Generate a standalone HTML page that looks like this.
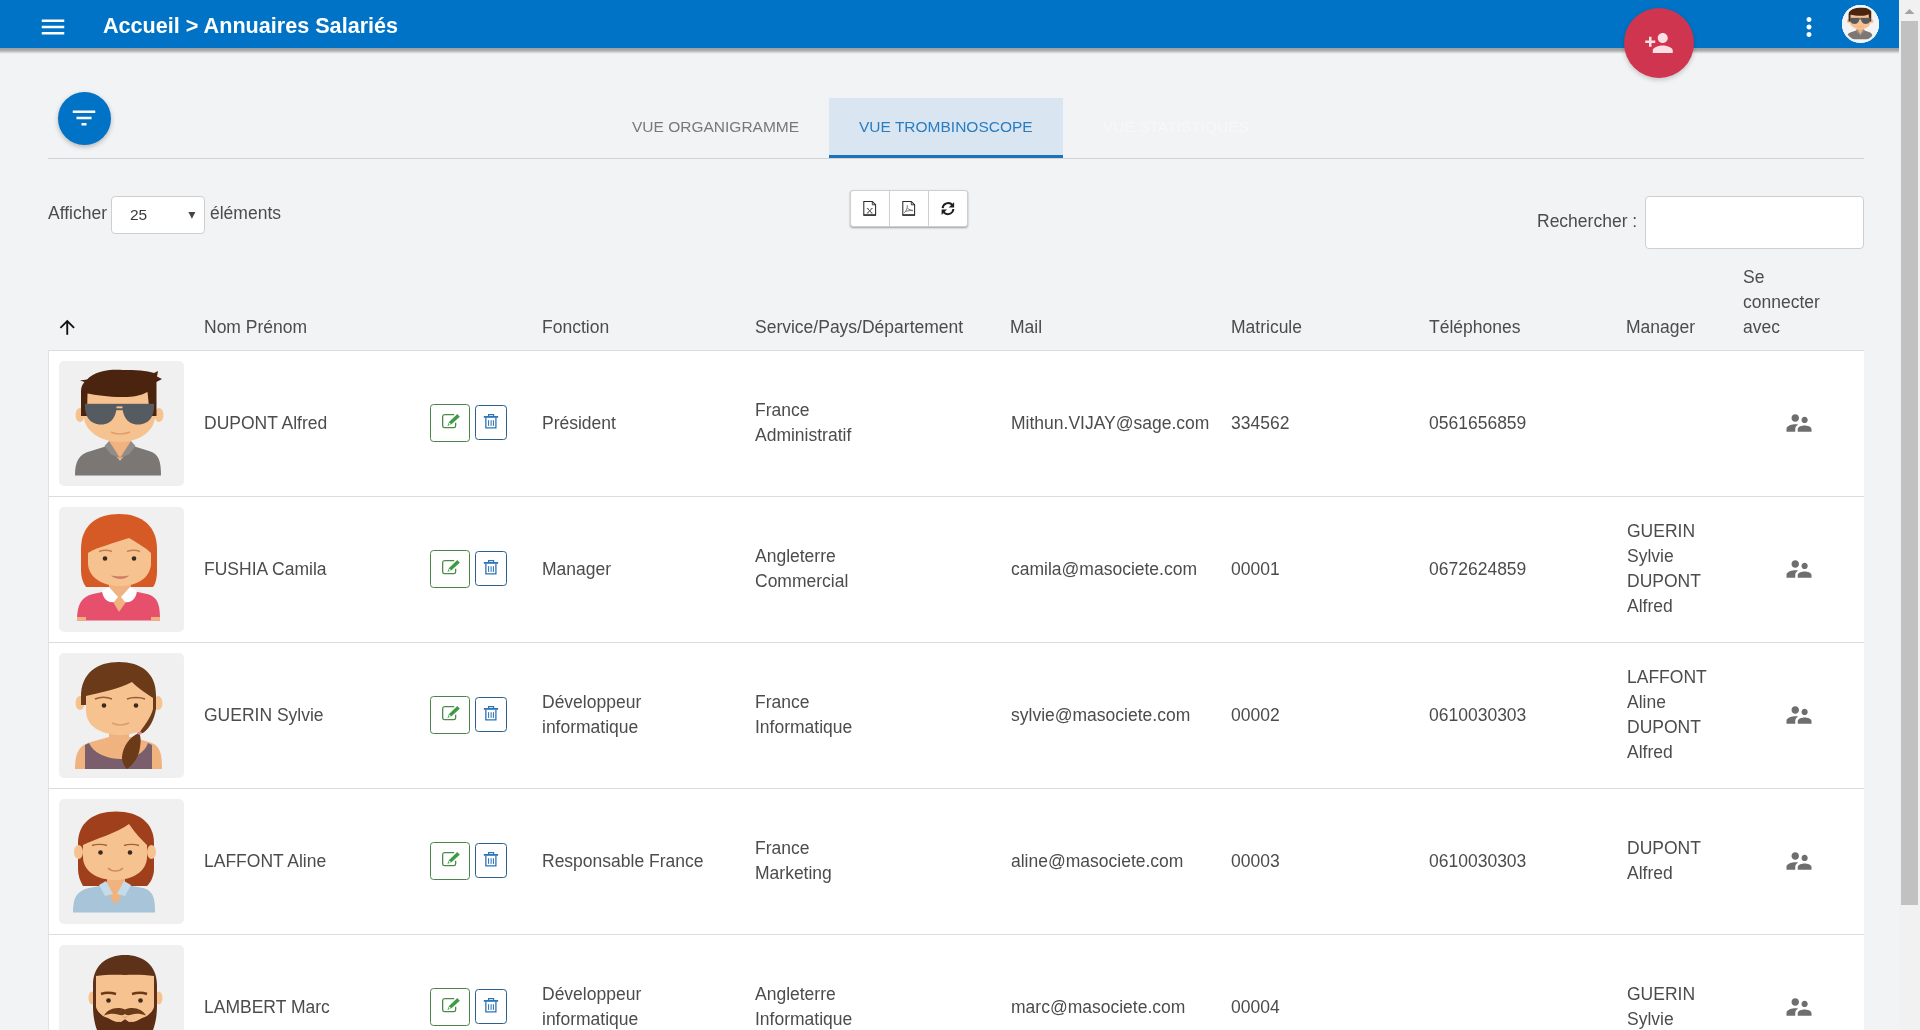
<!DOCTYPE html>
<html lang="fr"><head><meta charset="utf-8"><title>Annuaires Salariés</title>
<style>
html,body{margin:0;padding:0;width:1920px;height:1030px;overflow:hidden;background:#f2f3f5;font-family:"Liberation Sans",sans-serif;}
.a{position:absolute}
.t{white-space:nowrap;will-change:transform}
svg{display:block}
</style></head><body>

<div class="a" style="left:0;top:0;width:1899px;height:48px;background:#0073c6"></div><div class="a" style="left:0;top:48px;width:1899px;height:6px;background:linear-gradient(rgba(0,0,0,.36),rgba(0,0,0,.28) 45%,rgba(0,0,0,.08) 80%,rgba(0,0,0,0))"></div>
<svg class="a" style="left:38.25px;top:12px" width="30" height="30" viewBox="0 0 24 24" ><path d="M3 18h18v-2H3v2zm0-5h18v-2H3v2zm0-7v2h18V6H3z" fill="#ffffff"/></svg>
<div class="a t" style="left:103px;top:10.92px;font-size:21.6px;line-height:30px;color:#ffffff;font-weight:700;">Accueil &gt; Annuaires Salariés</div>
<svg class="a" style="left:1794px;top:12px" width="30" height="30" viewBox="0 0 24 24" ><path d="M12 8c1.1 0 2-.9 2-2s-.9-2-2-2-2 .9-2 2 .9 2 2 2zm0 2c-1.1 0-2 .9-2 2s.9 2 2 2 2-.9 2-2-.9-2-2-2zm0 6c-1.1 0-2 .9-2 2s.9 2 2 2 2-.9 2-2-.9-2-2-2z" fill="#ffffff"/></svg>
<div class="a" style="left:1842px;top:5px;width:37px;height:38px;border-radius:50%;background:#f4f2f2;overflow:hidden"><div style="position:absolute;left:0px;top:0.3px;transform:scale(0.30);transform-origin:0 0"><svg width="125" height="125" viewBox="0 0 125 125"><rect width="125" height="125" rx="5" fill="#f4f2f2"/>
<path d="M16 114.5 C16 100 20 93 32 90 L48 85 L74 85 L90 90 C100 93 102 100 102 114.5 Z" fill="#7a7774"/>
<path d="M50 72 V86 L61 100 L72 86 V72 Z" fill="#f0b27e"/>
<path d="M45.5 85 L50 80 L61 97 L51.5 93 Z" fill="#908c8a"/>
<path d="M76.5 85 L72 80 L61 97 L70.5 93 Z" fill="#908c8a"/>
<ellipse cx="21" cy="54" rx="4.5" ry="7" fill="#f6c390"/>
<ellipse cx="100" cy="54" rx="4.5" ry="7" fill="#f6c390"/>
<path d="M25 40 C25 28 40 24 61 24 C82 24 96 28 96 40 L96 55 C96 70 80 81 61 81 C42 81 25 70 25 55 Z" fill="#f6c390"/>
<path d="M21 19.5 L28 18.5 C36 10 50 8 64 9 C76 9 88 9.5 95 12 L99 10 L98 15.5 L103 18 L97.5 21 L97.5 55 L91 55 L88.5 31 C80 35.5 70 36.5 62 36 C50 36 36 34 28.5 32.5 L28 55 L22 55 L22 30 C22 26 23.5 23 25.5 21 Z" fill="#4b2410"/>
<path d="M26 43.5 H57.5 C58 53 54 63.5 42 63.5 C30 63.5 25.5 54 26 43.5 Z" fill="#555b61"/>
<path d="M63.5 43.5 H95 C95.5 54 91 63.5 79 63.5 C67 63.5 63 53 63.5 43.5 Z" fill="#555b61"/>
<rect x="26" y="42.8" width="69" height="2.6" fill="#555b61"/>
<rect x="55" y="47.3" width="11" height="1.9" fill="#555b61"/>
<path d="M52 71 C56 73.5 66 73.5 71 71" stroke="#dd9f6c" stroke-width="1.5" fill="none"/>
</svg></div></div>
<div class="a" style="left:1842px;top:5px;width:37px;height:38px;border-radius:50%;box-sizing:border-box;border:2px solid #eef6fb"></div>
<div class="a" style="left:1624px;top:8px;width:70px;height:70px;border-radius:50%;background:#d0354f;box-shadow:0 2px 5px rgba(0,0,0,.2)"></div>
<svg class="a" style="left:1644.2px;top:27.6px" width="30" height="30" viewBox="0 0 24 24" ><path d="M15 12c2.21 0 4-1.79 4-4s-1.79-4-4-4-4 1.79-4 4 1.79 4 4 4zm-9-2V7H4v3H1v2h3v3h2v-3h3v-2H6zm9 4c-2.67 0-8 1.34-8 4v2h16v-2c0-2.66-5.33-4-8-4z" fill="#fae0e4"/></svg>
<div class="a" style="left:57.8px;top:92.2px;width:52.8px;height:52.8px;border-radius:50%;background:#0073c6;box-shadow:0 2px 5px rgba(0,0,0,.25)"></div>
<svg class="a" style="left:69.15px;top:102.8px" width="30" height="30" viewBox="0 0 24 24" ><path d="M10 18h4v-2h-4v2zM3 6v2h18V6H3zm3 7h12v-2H6v2z" fill="#ffffff"/></svg>
<div class="a" style="left:48px;top:158px;width:1816px;height:1px;background:#d2d3d5"></div>
<div class="a" style="left:829px;top:98px;width:234px;height:60px;background:#d9e6f1"></div>
<div class="a" style="left:829px;top:155px;width:234px;height:3px;background:#1a72b8"></div>
<div class="a t" style="left:632.3px;top:114.23px;font-size:15.5px;line-height:25px;color:#787878;font-weight:400;">VUE ORGANIGRAMME</div>
<div class="a t" style="left:858.5px;top:114.23px;font-size:15.5px;line-height:25px;color:#2a7cc0;font-weight:400;">VUE TROMBINOSCOPE</div>
<div class="a t" style="left:1103px;top:114.23px;font-size:15.5px;line-height:25px;color:rgba(255,255,255,.4);font-weight:400;">VUE STATISTIQUES</div>
<div class="a t" style="left:48px;top:200.64px;font-size:17.5px;line-height:25px;color:#4c4c4c;font-weight:400;">Afficher</div>
<div class="a" style="left:111px;top:196px;width:94px;height:38px;box-sizing:border-box;border:1px solid #cfcfcf;border-radius:4px;background:#fff"></div>
<div class="a t" style="left:129.6px;top:202.13px;font-size:15.5px;line-height:25px;color:#3a3a3a;font-weight:400;">25</div>
<svg class="a" style="left:188px;top:211px" width="8" height="8" viewBox="0 0 8 8"><path d="M0.4 1 H7.4 L3.9 7.7 Z" fill="#444"/></svg>
<div class="a t" style="left:210.3px;top:200.64px;font-size:17.5px;line-height:25px;color:#4c4c4c;font-weight:400;">éléments</div>
<div class="a" style="left:850px;top:190px;width:118px;height:37px;box-sizing:border-box;border:1px solid #cfcfcf;border-radius:3px;background:#fff;box-shadow:0 1px 2px rgba(0,0,0,.35)"></div>
<div class="a" style="left:889px;top:191px;width:1px;height:36px;background:#cfcfcf"></div>
<div class="a" style="left:928px;top:191px;width:1px;height:36px;background:#cfcfcf"></div>
<svg class="a" style="left:862px;top:200px" width="16" height="17" viewBox="0 0 16 17">
<path d="M1.8 1.5 H10.3 L13.6 4.8 V15.0 H1.8 Z" fill="none" stroke="#2a2a2a" stroke-width="1.05"/>
<path d="M1.5 15.1 H13.9" stroke="#2a2a2a" stroke-width="1.4"/>
<path d="M10.3 1.6 V4.8 H13.5" fill="none" stroke="#2a2a2a" stroke-width="0.9"/>
<path d="M5.6 8.6 L9.8 13.0 M9.8 8.6 L5.6 13.0" stroke="#444" stroke-width="1"/>
<path d="M4.8 8.5 H6.6 M8.8 8.5 H10.6 M4.8 13.1 H6.6 M8.8 13.1 H10.6" stroke="#555" stroke-width="0.7"/>
</svg>
<svg class="a" style="left:901px;top:200px" width="16" height="17" viewBox="0 0 16 17">
<path d="M1.8 1.5 H10.3 L13.6 4.8 V15.0 H1.8 Z" fill="none" stroke="#2a2a2a" stroke-width="1.05"/>
<path d="M1.5 15.1 H13.9" stroke="#2a2a2a" stroke-width="1.4"/>
<path d="M10.3 1.6 V4.8 H13.5" fill="none" stroke="#2a2a2a" stroke-width="0.9"/>
<path d="M6.3 5.2 C6.6 8 5.5 10.5 3.2 12.9 M6.4 8.2 C8 9.6 10 10.2 12 10.4 M4.8 11.2 C7 10.6 9.5 10.4 12 10.6" fill="none" stroke="#6a6a6a" stroke-width="0.9"/>
</svg>
<svg class="a" style="left:940px;top:200px" width="16" height="17" viewBox="0 0 16 17">
<path d="M2.6 8.2 A5.6 5.6 0 0 1 12.4 5.0" fill="none" stroke="#1e1e1e" stroke-width="2"/>
<path d="M13.4 9.0 A5.6 5.6 0 0 1 3.6 12.2" fill="none" stroke="#1e1e1e" stroke-width="2"/>
<path d="M14.1 2.2 V7.6 H8.7 Z" fill="#1e1e1e"/>
<path d="M1.6 15.0 V9.6 H7.0 Z" fill="#1e1e1e"/>
</svg>
<div class="a t" style="left:1536.5px;top:208.54px;font-size:17.5px;line-height:25px;color:#4c4c4c;font-weight:400;">Rechercher :</div>
<div class="a" style="left:1645px;top:196px;width:219px;height:53px;box-sizing:border-box;border:1px solid #cfcfcf;border-radius:4px;background:#fff"></div>
<svg class="a" style="left:55.85px;top:316.35px" width="22.5" height="22.5" viewBox="0 0 24 24" ><path d="M4 12l1.41 1.41L11 7.83V20h2V7.83l5.58 5.59L20 12l-8-8-8 8z" fill="#111111"/></svg>
<div class="a t" style="left:203.6px;top:314.84px;font-size:17.5px;line-height:25px;color:#4c4c4c;font-weight:400;">Nom Prénom</div>
<div class="a t" style="left:541.6px;top:314.84px;font-size:17.5px;line-height:25px;color:#4c4c4c;font-weight:400;">Fonction</div>
<div class="a t" style="left:754.6px;top:314.84px;font-size:17.5px;line-height:25px;color:#4c4c4c;font-weight:400;">Service/Pays/Département</div>
<div class="a t" style="left:1010.1px;top:314.84px;font-size:17.5px;line-height:25px;color:#4c4c4c;font-weight:400;">Mail</div>
<div class="a t" style="left:1230.6px;top:314.84px;font-size:17.5px;line-height:25px;color:#4c4c4c;font-weight:400;">Matricule</div>
<div class="a t" style="left:1429.1px;top:314.84px;font-size:17.5px;line-height:25px;color:#4c4c4c;font-weight:400;">Téléphones</div>
<div class="a t" style="left:1626.1px;top:314.84px;font-size:17.5px;line-height:25px;color:#4c4c4c;font-weight:400;">Manager</div>
<div class="a t" style="left:1743px;top:264.84px;font-size:17.5px;line-height:25px;color:#4c4c4c;font-weight:400;">Se</div>
<div class="a t" style="left:1743px;top:289.84px;font-size:17.5px;line-height:25px;color:#4c4c4c;font-weight:400;">connecter</div>
<div class="a t" style="left:1743px;top:314.84px;font-size:17.5px;line-height:25px;color:#4c4c4c;font-weight:400;">avec</div>
<div class="a" style="left:48px;top:350px;width:1816px;height:146px;box-sizing:border-box;background:#fff;border-top:1px solid #dcdcdc;border-left:1px solid #e2e2e2"></div>
<div class="a" style="left:59px;top:361px;width:125px;height:125px"><svg width="125" height="125" viewBox="0 0 125 125"><rect width="125" height="125" rx="5" fill="#f0f0f0"/>
<path d="M16 114.5 C16 100 20 93 32 90 L48 85 L74 85 L90 90 C100 93 102 100 102 114.5 Z" fill="#7a7774"/>
<path d="M50 72 V86 L61 100 L72 86 V72 Z" fill="#f0b27e"/>
<path d="M45.5 85 L50 80 L61 97 L51.5 93 Z" fill="#908c8a"/>
<path d="M76.5 85 L72 80 L61 97 L70.5 93 Z" fill="#908c8a"/>
<ellipse cx="21" cy="54" rx="4.5" ry="7" fill="#f6c390"/>
<ellipse cx="100" cy="54" rx="4.5" ry="7" fill="#f6c390"/>
<path d="M25 40 C25 28 40 24 61 24 C82 24 96 28 96 40 L96 55 C96 70 80 81 61 81 C42 81 25 70 25 55 Z" fill="#f6c390"/>
<path d="M21 19.5 L28 18.5 C36 10 50 8 64 9 C76 9 88 9.5 95 12 L99 10 L98 15.5 L103 18 L97.5 21 L97.5 55 L91 55 L88.5 31 C80 35.5 70 36.5 62 36 C50 36 36 34 28.5 32.5 L28 55 L22 55 L22 30 C22 26 23.5 23 25.5 21 Z" fill="#4b2410"/>
<path d="M26 43.5 H57.5 C58 53 54 63.5 42 63.5 C30 63.5 25.5 54 26 43.5 Z" fill="#555b61"/>
<path d="M63.5 43.5 H95 C95.5 54 91 63.5 79 63.5 C67 63.5 63 53 63.5 43.5 Z" fill="#555b61"/>
<rect x="26" y="42.8" width="69" height="2.6" fill="#555b61"/>
<rect x="55" y="47.3" width="11" height="1.9" fill="#555b61"/>
<path d="M52 71 C56 73.5 66 73.5 71 71" stroke="#dd9f6c" stroke-width="1.5" fill="none"/>
</svg></div>
<div class="a t" style="left:203.6px;top:411.04px;font-size:17.5px;line-height:25px;color:#4c4c4c;font-weight:400;">DUPONT Alfred</div>
<div class="a" style="left:430px;top:404px;width:40px;height:38px;box-sizing:border-box;border:1px solid #4b834b;border-radius:3.5px;background:#fff"></div>
<svg class="a" style="left:440px;top:412px" width="22" height="18" viewBox="0 0 22 18">
<path d="M14.2 2.65 H4.6 A2 2 0 0 0 2.65 4.6 V13.7 A2 2 0 0 0 4.6 15.65 H13.7 A2 2 0 0 0 15.65 13.7 V10.8" fill="none" stroke="#4a8a4a" stroke-width="1.3"/>
<path d="M17.3 2.1 L19.8 4.8 L11.4 12.2 L7.4 14.0 L9.0 9.9 Z" fill="#3f9a45"/>
<circle cx="9.7" cy="11.9" r="0.9" fill="#ffffff"/>
</svg>
<div class="a" style="left:475px;top:405px;width:32px;height:35px;box-sizing:border-box;border:1px solid #2c5f8c;border-radius:3.5px;background:#fff"></div>
<svg class="a" style="left:483px;top:412px" width="16" height="18" viewBox="0 0 16 18">
<rect x="0.8" y="4" width="14.3" height="1.8" fill="#2a74b8"/>
<path d="M5.6 4.2 V2.6 H10.6 V4.2" fill="none" stroke="#2a74b8" stroke-width="1.2"/>
<path d="M2.85 5.8 V15.95 H12.9 V5.8" fill="none" stroke="#2a74b8" stroke-width="1.3"/>
<path d="M5.6 8.2 V13.9 M8.1 8.2 V13.9 M10.4 8.2 V13.9" stroke="#2a6aa8" stroke-width="1"/>
</svg>
<div class="a t" style="left:541.6px;top:411.04px;font-size:17.5px;line-height:25px;color:#4c4c4c;font-weight:400;">Président</div>
<div class="a t" style="left:754.6px;top:397.54px;font-size:17.5px;line-height:25px;color:#4c4c4c;font-weight:400;">France</div><div class="a t" style="left:754.6px;top:422.54px;font-size:17.5px;line-height:25px;color:#4c4c4c;font-weight:400;">Administratif</div>
<div class="a t" style="left:1010.6px;top:411.04px;font-size:17.5px;line-height:25px;color:#4c4c4c;font-weight:400;">Mithun.VIJAY@sage.com</div>
<div class="a t" style="left:1230.6px;top:411.04px;font-size:17.5px;line-height:25px;color:#4c4c4c;font-weight:400;">334562</div>
<div class="a t" style="left:1429.1px;top:411.04px;font-size:17.5px;line-height:25px;color:#4c4c4c;font-weight:400;">0561656859</div>
<svg class="a" style="left:1784px;top:408px" width="30" height="30" viewBox="0 0 24 24" ><path d="M16.5 12c1.38 0 2.49-1.12 2.49-2.5S17.88 7 16.5 7C15.12 7 14 8.12 14 9.5s1.12 2.5 2.5 2.5zM9 11c1.66 0 2.99-1.34 2.99-3S10.66 5 9 5C7.34 5 6 6.34 6 8s1.34 3 3 3zm7.5 3c-1.83 0-5.5.92-5.5 2.75V19h11v-2.25c0-1.83-3.67-2.75-5.5-2.75zM9 13c-2.33 0-7 1.17-7 3.5V19h7v-2.25c0-.85.33-2.34 2.37-3.47C10.5 13.1 9.66 13 9 13z" fill="#6e6e6e"/></svg>
<div class="a" style="left:48px;top:496px;width:1816px;height:146px;box-sizing:border-box;background:#fff;border-top:1px solid #dcdcdc;border-left:1px solid #e2e2e2"></div>
<div class="a" style="left:59px;top:507px;width:125px;height:125px"><svg width="125" height="125" viewBox="0 0 125 125"><rect width="125" height="125" rx="5" fill="#f0f0f0"/>
<path d="M22 42 C22 18 38 7 60 7 C84 7 98 20 98 42 L98 64 C98 72 96 78 94 80 L27 80 C24 76 22 70 22 64 Z" fill="#d65a25"/>
<path d="M18 113.5 C18 98 22 90 34 87 L48 84 L74 84 L88 87 C99 90 101 98 101 113.5 Z" fill="#e6506d"/>
<rect x="18" y="110" width="9" height="3.5" fill="#f0b27e"/>
<rect x="92" y="110" width="9" height="3.5" fill="#f0b27e"/>
<path d="M50 72 V88 L60 105 L72 88 V72 Z" fill="#f0b27e"/>
<path d="M43 84 C44 92 49 96 55 95 L59 90 L50 80 Z" fill="#ffffff"/>
<path d="M78 84 C77 92 72 96 66 95 L62 90 L71 80 Z" fill="#ffffff"/>
<path d="M29 46 C38 40 56 36 70 31 C78 36 86 40 92 46 L92 56 C92 70 79 79 61 79 C43 79 29 70 29 56 Z" fill="#f6c390"/>
<path d="M40 44.5 C44 43 49 43 53 44.5" stroke="#c97d50" stroke-width="1.4" fill="none"/>
<path d="M68 44.5 C72 43 77 43 81 44.5" stroke="#c97d50" stroke-width="1.4" fill="none"/>
<circle cx="46" cy="51.5" r="2.3" fill="#3d2a1e"/>
<circle cx="75" cy="51.5" r="2.3" fill="#3d2a1e"/>
<path d="M52 68.5 C57 69.5 65 69.5 70 68.5 C67 73 56 73 52 68.5 Z" fill="#cf8066"/>
</svg></div>
<div class="a t" style="left:203.6px;top:557.04px;font-size:17.5px;line-height:25px;color:#4c4c4c;font-weight:400;">FUSHIA Camila</div>
<div class="a" style="left:430px;top:550px;width:40px;height:38px;box-sizing:border-box;border:1px solid #4b834b;border-radius:3.5px;background:#fff"></div>
<svg class="a" style="left:440px;top:558px" width="22" height="18" viewBox="0 0 22 18">
<path d="M14.2 2.65 H4.6 A2 2 0 0 0 2.65 4.6 V13.7 A2 2 0 0 0 4.6 15.65 H13.7 A2 2 0 0 0 15.65 13.7 V10.8" fill="none" stroke="#4a8a4a" stroke-width="1.3"/>
<path d="M17.3 2.1 L19.8 4.8 L11.4 12.2 L7.4 14.0 L9.0 9.9 Z" fill="#3f9a45"/>
<circle cx="9.7" cy="11.9" r="0.9" fill="#ffffff"/>
</svg>
<div class="a" style="left:475px;top:551px;width:32px;height:35px;box-sizing:border-box;border:1px solid #2c5f8c;border-radius:3.5px;background:#fff"></div>
<svg class="a" style="left:483px;top:558px" width="16" height="18" viewBox="0 0 16 18">
<rect x="0.8" y="4" width="14.3" height="1.8" fill="#2a74b8"/>
<path d="M5.6 4.2 V2.6 H10.6 V4.2" fill="none" stroke="#2a74b8" stroke-width="1.2"/>
<path d="M2.85 5.8 V15.95 H12.9 V5.8" fill="none" stroke="#2a74b8" stroke-width="1.3"/>
<path d="M5.6 8.2 V13.9 M8.1 8.2 V13.9 M10.4 8.2 V13.9" stroke="#2a6aa8" stroke-width="1"/>
</svg>
<div class="a t" style="left:541.6px;top:557.04px;font-size:17.5px;line-height:25px;color:#4c4c4c;font-weight:400;">Manager</div>
<div class="a t" style="left:754.6px;top:543.54px;font-size:17.5px;line-height:25px;color:#4c4c4c;font-weight:400;">Angleterre</div><div class="a t" style="left:754.6px;top:568.54px;font-size:17.5px;line-height:25px;color:#4c4c4c;font-weight:400;">Commercial</div>
<div class="a t" style="left:1010.6px;top:557.04px;font-size:17.5px;line-height:25px;color:#4c4c4c;font-weight:400;">camila@masociete.com</div>
<div class="a t" style="left:1230.6px;top:557.04px;font-size:17.5px;line-height:25px;color:#4c4c4c;font-weight:400;">00001</div>
<div class="a t" style="left:1429.1px;top:557.04px;font-size:17.5px;line-height:25px;color:#4c4c4c;font-weight:400;">0672624859</div>
<div class="a t" style="left:1626.6px;top:518.54px;font-size:17.5px;line-height:25px;color:#4c4c4c;font-weight:400;">GUERIN</div><div class="a t" style="left:1626.6px;top:543.54px;font-size:17.5px;line-height:25px;color:#4c4c4c;font-weight:400;">Sylvie</div><div class="a t" style="left:1626.6px;top:568.54px;font-size:17.5px;line-height:25px;color:#4c4c4c;font-weight:400;">DUPONT</div><div class="a t" style="left:1626.6px;top:593.54px;font-size:17.5px;line-height:25px;color:#4c4c4c;font-weight:400;">Alfred</div>
<svg class="a" style="left:1784px;top:554px" width="30" height="30" viewBox="0 0 24 24" ><path d="M16.5 12c1.38 0 2.49-1.12 2.49-2.5S17.88 7 16.5 7C15.12 7 14 8.12 14 9.5s1.12 2.5 2.5 2.5zM9 11c1.66 0 2.99-1.34 2.99-3S10.66 5 9 5C7.34 5 6 6.34 6 8s1.34 3 3 3zm7.5 3c-1.83 0-5.5.92-5.5 2.75V19h11v-2.25c0-1.83-3.67-2.75-5.5-2.75zM9 13c-2.33 0-7 1.17-7 3.5V19h7v-2.25c0-.85.33-2.34 2.37-3.47C10.5 13.1 9.66 13 9 13z" fill="#6e6e6e"/></svg>
<div class="a" style="left:48px;top:642px;width:1816px;height:146px;box-sizing:border-box;background:#fff;border-top:1px solid #dcdcdc;border-left:1px solid #e2e2e2"></div>
<div class="a" style="left:59px;top:653px;width:125px;height:125px"><svg width="125" height="125" viewBox="0 0 125 125"><rect width="125" height="125" rx="5" fill="#f0f0f0"/>
<path d="M16 116 C16 100 20 92 32 89 L50 84 L72 84 L90 89 C101 92 103 100 103 116 Z" fill="#f0b27e"/>
<path d="M26 116 L26 92 L30 90 C34 100 48 106 62 106 C74 106 86 100 89 90 L93 92 L93 116 Z" fill="#7a5e6c"/>
<path d="M50 72 V88 C54 94 66 94 70 88 V72 Z" fill="#f0b27e"/>
<ellipse cx="21" cy="50" rx="4.5" ry="7" fill="#f6c390"/>
<ellipse cx="99" cy="50" rx="4.5" ry="7" fill="#f6c390"/>
<path d="M27 42 C27 30 42 26 61 26 C80 26 94 30 94 42 L94 58 C94 73 80 82 61 82 C42 82 27 73 27 58 Z" fill="#f6c390"/>
<path d="M22 44 C22 20 38 9 60 9 C82 9 97 20 97 42 L97 56 C95 68 90 76 84 80 L80 80 C86 72 92 64 94 56 L94 45 C86 40 78 34 73 29 C60 36 40 40 27 43 L27 52 L22 52 Z" fill="#6b3a19"/>
<path d="M80 80 C70 84 64 94 63 104 C63 110 66 114 68 116 C74 112 80 104 81 94 C82 88 82 84 80 80 Z" fill="#6b3a19"/>
<ellipse cx="80.5" cy="80" rx="2.5" ry="1.5" fill="#e48a90"/>
<path d="M36 46 C41 44 48 44 53 46" stroke="#9a5a34" stroke-width="1.4" fill="none"/>
<path d="M68 46 C73 44 81 44 86 46" stroke="#9a5a34" stroke-width="1.4" fill="none"/>
<circle cx="45" cy="52.5" r="2.3" fill="#3d2a1e"/>
<circle cx="77" cy="52.5" r="2.3" fill="#3d2a1e"/>
<path d="M53 70 C57 72.5 65 72.5 70 70" stroke="#dc9c6c" stroke-width="1.5" fill="none"/>
</svg></div>
<div class="a t" style="left:203.6px;top:703.04px;font-size:17.5px;line-height:25px;color:#4c4c4c;font-weight:400;">GUERIN Sylvie</div>
<div class="a" style="left:430px;top:696px;width:40px;height:38px;box-sizing:border-box;border:1px solid #4b834b;border-radius:3.5px;background:#fff"></div>
<svg class="a" style="left:440px;top:704px" width="22" height="18" viewBox="0 0 22 18">
<path d="M14.2 2.65 H4.6 A2 2 0 0 0 2.65 4.6 V13.7 A2 2 0 0 0 4.6 15.65 H13.7 A2 2 0 0 0 15.65 13.7 V10.8" fill="none" stroke="#4a8a4a" stroke-width="1.3"/>
<path d="M17.3 2.1 L19.8 4.8 L11.4 12.2 L7.4 14.0 L9.0 9.9 Z" fill="#3f9a45"/>
<circle cx="9.7" cy="11.9" r="0.9" fill="#ffffff"/>
</svg>
<div class="a" style="left:475px;top:697px;width:32px;height:35px;box-sizing:border-box;border:1px solid #2c5f8c;border-radius:3.5px;background:#fff"></div>
<svg class="a" style="left:483px;top:704px" width="16" height="18" viewBox="0 0 16 18">
<rect x="0.8" y="4" width="14.3" height="1.8" fill="#2a74b8"/>
<path d="M5.6 4.2 V2.6 H10.6 V4.2" fill="none" stroke="#2a74b8" stroke-width="1.2"/>
<path d="M2.85 5.8 V15.95 H12.9 V5.8" fill="none" stroke="#2a74b8" stroke-width="1.3"/>
<path d="M5.6 8.2 V13.9 M8.1 8.2 V13.9 M10.4 8.2 V13.9" stroke="#2a6aa8" stroke-width="1"/>
</svg>
<div class="a t" style="left:541.6px;top:689.54px;font-size:17.5px;line-height:25px;color:#4c4c4c;font-weight:400;">Développeur</div><div class="a t" style="left:541.6px;top:714.54px;font-size:17.5px;line-height:25px;color:#4c4c4c;font-weight:400;">informatique</div>
<div class="a t" style="left:754.6px;top:689.54px;font-size:17.5px;line-height:25px;color:#4c4c4c;font-weight:400;">France</div><div class="a t" style="left:754.6px;top:714.54px;font-size:17.5px;line-height:25px;color:#4c4c4c;font-weight:400;">Informatique</div>
<div class="a t" style="left:1010.6px;top:703.04px;font-size:17.5px;line-height:25px;color:#4c4c4c;font-weight:400;">sylvie@masociete.com</div>
<div class="a t" style="left:1230.6px;top:703.04px;font-size:17.5px;line-height:25px;color:#4c4c4c;font-weight:400;">00002</div>
<div class="a t" style="left:1429.1px;top:703.04px;font-size:17.5px;line-height:25px;color:#4c4c4c;font-weight:400;">0610030303</div>
<div class="a t" style="left:1626.6px;top:664.54px;font-size:17.5px;line-height:25px;color:#4c4c4c;font-weight:400;">LAFFONT</div><div class="a t" style="left:1626.6px;top:689.54px;font-size:17.5px;line-height:25px;color:#4c4c4c;font-weight:400;">Aline</div><div class="a t" style="left:1626.6px;top:714.54px;font-size:17.5px;line-height:25px;color:#4c4c4c;font-weight:400;">DUPONT</div><div class="a t" style="left:1626.6px;top:739.54px;font-size:17.5px;line-height:25px;color:#4c4c4c;font-weight:400;">Alfred</div>
<svg class="a" style="left:1784px;top:700px" width="30" height="30" viewBox="0 0 24 24" ><path d="M16.5 12c1.38 0 2.49-1.12 2.49-2.5S17.88 7 16.5 7C15.12 7 14 8.12 14 9.5s1.12 2.5 2.5 2.5zM9 11c1.66 0 2.99-1.34 2.99-3S10.66 5 9 5C7.34 5 6 6.34 6 8s1.34 3 3 3zm7.5 3c-1.83 0-5.5.92-5.5 2.75V19h11v-2.25c0-1.83-3.67-2.75-5.5-2.75zM9 13c-2.33 0-7 1.17-7 3.5V19h7v-2.25c0-.85.33-2.34 2.37-3.47C10.5 13.1 9.66 13 9 13z" fill="#6e6e6e"/></svg>
<div class="a" style="left:48px;top:788px;width:1816px;height:146px;box-sizing:border-box;background:#fff;border-top:1px solid #dcdcdc;border-left:1px solid #e2e2e2"></div>
<div class="a" style="left:59px;top:799px;width:125px;height:125px"><svg width="125" height="125" viewBox="0 0 125 125"><rect width="125" height="125" rx="5" fill="#f0f0f0"/>
<path d="M19 44 C19 24 34 12.5 57 12.5 C80 12.5 95 24 95 44 L95 70 C95 78 91 84 88 87 L24 87 C21 82 19 76 19 70 Z" fill="#9f3f1c"/>
<path d="M14 113.5 C14 98 18 92 30 89 L46 86 L68 86 L84 89 C94 92 96 98 96 113.5 Z" fill="#a7c4d8"/>
<path d="M48 74 V92 L56 106 L66 92 V74 Z" fill="#f0b27e"/>
<path d="M40 86 L47 82 L54 95 L46 97 Z" fill="#c6dbea"/>
<path d="M72 86 L65 82 L58 95 L66 97 Z" fill="#c6dbea"/>
<ellipse cx="19.5" cy="53" rx="4.5" ry="7" fill="#f6c390"/>
<ellipse cx="92.5" cy="53" rx="4.5" ry="7" fill="#f6c390"/>
<path d="M24 46 C36 40 58 34 70 25 C76 34 82 40 88 46 L88 58 C88 72 74 81 56 81 C38 81 24 72 24 58 Z" fill="#f6c390"/>
<path d="M33 46.5 C37 45 44 45 48 46.5" stroke="#a85f34" stroke-width="1.4" fill="none"/>
<path d="M65 46.5 C69 45 76 45 80 46.5" stroke="#a85f34" stroke-width="1.4" fill="none"/>
<circle cx="41.5" cy="53.5" r="2.3" fill="#3d2a1e"/>
<circle cx="71" cy="53.5" r="2.3" fill="#3d2a1e"/>
<path d="M49 69 C53 73 60 73 64 69" stroke="#d08a60" stroke-width="1.6" fill="none"/>
</svg></div>
<div class="a t" style="left:203.6px;top:849.04px;font-size:17.5px;line-height:25px;color:#4c4c4c;font-weight:400;">LAFFONT Aline</div>
<div class="a" style="left:430px;top:842px;width:40px;height:38px;box-sizing:border-box;border:1px solid #4b834b;border-radius:3.5px;background:#fff"></div>
<svg class="a" style="left:440px;top:850px" width="22" height="18" viewBox="0 0 22 18">
<path d="M14.2 2.65 H4.6 A2 2 0 0 0 2.65 4.6 V13.7 A2 2 0 0 0 4.6 15.65 H13.7 A2 2 0 0 0 15.65 13.7 V10.8" fill="none" stroke="#4a8a4a" stroke-width="1.3"/>
<path d="M17.3 2.1 L19.8 4.8 L11.4 12.2 L7.4 14.0 L9.0 9.9 Z" fill="#3f9a45"/>
<circle cx="9.7" cy="11.9" r="0.9" fill="#ffffff"/>
</svg>
<div class="a" style="left:475px;top:843px;width:32px;height:35px;box-sizing:border-box;border:1px solid #2c5f8c;border-radius:3.5px;background:#fff"></div>
<svg class="a" style="left:483px;top:850px" width="16" height="18" viewBox="0 0 16 18">
<rect x="0.8" y="4" width="14.3" height="1.8" fill="#2a74b8"/>
<path d="M5.6 4.2 V2.6 H10.6 V4.2" fill="none" stroke="#2a74b8" stroke-width="1.2"/>
<path d="M2.85 5.8 V15.95 H12.9 V5.8" fill="none" stroke="#2a74b8" stroke-width="1.3"/>
<path d="M5.6 8.2 V13.9 M8.1 8.2 V13.9 M10.4 8.2 V13.9" stroke="#2a6aa8" stroke-width="1"/>
</svg>
<div class="a t" style="left:541.6px;top:849.04px;font-size:17.5px;line-height:25px;color:#4c4c4c;font-weight:400;">Responsable France</div>
<div class="a t" style="left:754.6px;top:835.54px;font-size:17.5px;line-height:25px;color:#4c4c4c;font-weight:400;">France</div><div class="a t" style="left:754.6px;top:860.54px;font-size:17.5px;line-height:25px;color:#4c4c4c;font-weight:400;">Marketing</div>
<div class="a t" style="left:1010.6px;top:849.04px;font-size:17.5px;line-height:25px;color:#4c4c4c;font-weight:400;">aline@masociete.com</div>
<div class="a t" style="left:1230.6px;top:849.04px;font-size:17.5px;line-height:25px;color:#4c4c4c;font-weight:400;">00003</div>
<div class="a t" style="left:1429.1px;top:849.04px;font-size:17.5px;line-height:25px;color:#4c4c4c;font-weight:400;">0610030303</div>
<div class="a t" style="left:1626.6px;top:835.54px;font-size:17.5px;line-height:25px;color:#4c4c4c;font-weight:400;">DUPONT</div><div class="a t" style="left:1626.6px;top:860.54px;font-size:17.5px;line-height:25px;color:#4c4c4c;font-weight:400;">Alfred</div>
<svg class="a" style="left:1784px;top:846px" width="30" height="30" viewBox="0 0 24 24" ><path d="M16.5 12c1.38 0 2.49-1.12 2.49-2.5S17.88 7 16.5 7C15.12 7 14 8.12 14 9.5s1.12 2.5 2.5 2.5zM9 11c1.66 0 2.99-1.34 2.99-3S10.66 5 9 5C7.34 5 6 6.34 6 8s1.34 3 3 3zm7.5 3c-1.83 0-5.5.92-5.5 2.75V19h11v-2.25c0-1.83-3.67-2.75-5.5-2.75zM9 13c-2.33 0-7 1.17-7 3.5V19h7v-2.25c0-.85.33-2.34 2.37-3.47C10.5 13.1 9.66 13 9 13z" fill="#6e6e6e"/></svg>
<div class="a" style="left:48px;top:934px;width:1816px;height:146px;box-sizing:border-box;background:#fff;border-top:1px solid #dcdcdc;border-left:1px solid #e2e2e2"></div>
<div class="a" style="left:59px;top:945px;width:125px;height:125px"><svg width="125" height="125" viewBox="0 0 125 125"><rect width="125" height="125" rx="5" fill="#f0f0f0"/>
<path d="M18 125 C18 110 28 104 42 100 L82 100 C96 104 104 110 104 125 Z" fill="#6a6a6a"/>
<ellipse cx="33" cy="53" rx="3.5" ry="6.5" fill="#f6c390"/>
<ellipse cx="100" cy="53" rx="3.5" ry="6.5" fill="#f6c390"/>
<path d="M37 29 H95 V62 C95 82 84 92 66 92 C48 92 37 82 37 62 Z" fill="#f6c390"/>
<path d="M34 40 C34 20 48 10 66 10 C84 10 98 20 98 40 L98 62 L95 62 L95 31 C85 29.5 74 29.5 66 30 C58 29.5 46 29.5 37 31 L37 62 L34 62 Z" fill="#5e3218"/>
<path d="M34 60 C34 92 48 104 66 104 C84 104 98 92 98 60 L95 62 C94 66 90 70 86 72 C82 73 79 76 74 77 C71 77 68 76 66 74 C64 76 61 77 58 77 C53 76 50 73 46 72 C42 70 38 66 37 62 Z" fill="#5a2d14"/>
<path d="M52 70 C56 74 60 77 62 77 L66 74 L70 77 C72 77 76 74 80 70 C74 70 70 72 66 72 C62 72 58 70 52 70 Z" fill="#f3bf8c"/>
<path d="M62 70.5 C64 72 68 72 70 70.5 L66 73.5 Z" fill="#e0a080"/>
<path d="M45 70.5 C49 64 57 61 66 64.5 C75 61 83 64 87 70.5 C82 68.5 77 68 73 69.5 C70 70.5 68 70.5 66 69 C64 70.5 62 70.5 59 69.5 C55 68 50 68.5 45 70.5 Z" fill="#6b3a1a"/>
<path d="M42 49 C46 47.5 52 47.5 57 49" stroke="#6b3a1a" stroke-width="2.6" fill="none"/>
<path d="M73 49 C78 47.5 84 47.5 88 49" stroke="#6b3a1a" stroke-width="2.6" fill="none"/>
<circle cx="49.5" cy="55.5" r="2.3" fill="#3d2a1e"/>
<circle cx="81.5" cy="55.5" r="2.3" fill="#3d2a1e"/>
</svg></div>
<div class="a t" style="left:203.6px;top:995.04px;font-size:17.5px;line-height:25px;color:#4c4c4c;font-weight:400;">LAMBERT Marc</div>
<div class="a" style="left:430px;top:988px;width:40px;height:38px;box-sizing:border-box;border:1px solid #4b834b;border-radius:3.5px;background:#fff"></div>
<svg class="a" style="left:440px;top:996px" width="22" height="18" viewBox="0 0 22 18">
<path d="M14.2 2.65 H4.6 A2 2 0 0 0 2.65 4.6 V13.7 A2 2 0 0 0 4.6 15.65 H13.7 A2 2 0 0 0 15.65 13.7 V10.8" fill="none" stroke="#4a8a4a" stroke-width="1.3"/>
<path d="M17.3 2.1 L19.8 4.8 L11.4 12.2 L7.4 14.0 L9.0 9.9 Z" fill="#3f9a45"/>
<circle cx="9.7" cy="11.9" r="0.9" fill="#ffffff"/>
</svg>
<div class="a" style="left:475px;top:989px;width:32px;height:35px;box-sizing:border-box;border:1px solid #2c5f8c;border-radius:3.5px;background:#fff"></div>
<svg class="a" style="left:483px;top:996px" width="16" height="18" viewBox="0 0 16 18">
<rect x="0.8" y="4" width="14.3" height="1.8" fill="#2a74b8"/>
<path d="M5.6 4.2 V2.6 H10.6 V4.2" fill="none" stroke="#2a74b8" stroke-width="1.2"/>
<path d="M2.85 5.8 V15.95 H12.9 V5.8" fill="none" stroke="#2a74b8" stroke-width="1.3"/>
<path d="M5.6 8.2 V13.9 M8.1 8.2 V13.9 M10.4 8.2 V13.9" stroke="#2a6aa8" stroke-width="1"/>
</svg>
<div class="a t" style="left:541.6px;top:981.54px;font-size:17.5px;line-height:25px;color:#4c4c4c;font-weight:400;">Développeur</div><div class="a t" style="left:541.6px;top:1006.54px;font-size:17.5px;line-height:25px;color:#4c4c4c;font-weight:400;">informatique</div>
<div class="a t" style="left:754.6px;top:981.54px;font-size:17.5px;line-height:25px;color:#4c4c4c;font-weight:400;">Angleterre</div><div class="a t" style="left:754.6px;top:1006.54px;font-size:17.5px;line-height:25px;color:#4c4c4c;font-weight:400;">Informatique</div>
<div class="a t" style="left:1010.6px;top:995.04px;font-size:17.5px;line-height:25px;color:#4c4c4c;font-weight:400;">marc@masociete.com</div>
<div class="a t" style="left:1230.6px;top:995.04px;font-size:17.5px;line-height:25px;color:#4c4c4c;font-weight:400;">00004</div>
<div class="a t" style="left:1626.6px;top:981.54px;font-size:17.5px;line-height:25px;color:#4c4c4c;font-weight:400;">GUERIN</div><div class="a t" style="left:1626.6px;top:1006.54px;font-size:17.5px;line-height:25px;color:#4c4c4c;font-weight:400;">Sylvie</div>
<svg class="a" style="left:1784px;top:992px" width="30" height="30" viewBox="0 0 24 24" ><path d="M16.5 12c1.38 0 2.49-1.12 2.49-2.5S17.88 7 16.5 7C15.12 7 14 8.12 14 9.5s1.12 2.5 2.5 2.5zM9 11c1.66 0 2.99-1.34 2.99-3S10.66 5 9 5C7.34 5 6 6.34 6 8s1.34 3 3 3zm7.5 3c-1.83 0-5.5.92-5.5 2.75V19h11v-2.25c0-1.83-3.67-2.75-5.5-2.75zM9 13c-2.33 0-7 1.17-7 3.5V19h7v-2.25c0-.85.33-2.34 2.37-3.47C10.5 13.1 9.66 13 9 13z" fill="#6e6e6e"/></svg>
<div class="a" style="left:1899px;top:0;width:21px;height:1030px;background:#f1f1f1"></div>
<div class="a" style="left:1901px;top:21px;width:17px;height:884px;background:#c1c1c1"></div>
<svg class="a" style="left:1904px;top:8px" width="11" height="7" viewBox="0 0 11 7"><path d="M0.5 6 L5.5 1 L10.5 6 Z" fill="#a3a3a3"/></svg>
</body></html>
